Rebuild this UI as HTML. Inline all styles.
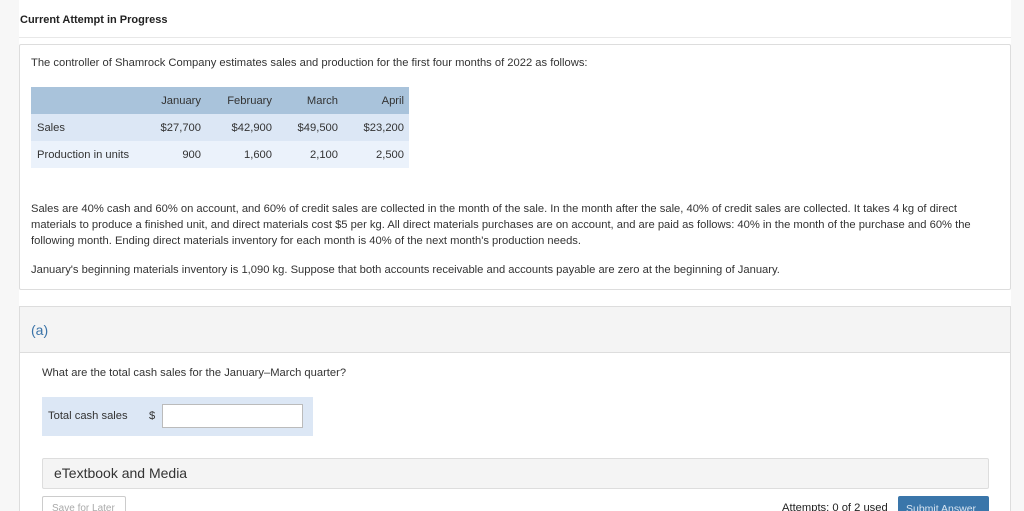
<!DOCTYPE html>
<html style="overflow:hidden;width:1024px;height:511px"><head><meta charset="utf-8"><style>
*{margin:0;padding:0;box-sizing:border-box}
body{width:1024px;height:511px;overflow:hidden;background:#fff;font-family:"Liberation Sans",sans-serif;color:#333;font-size:11.2px;position:relative}
.a{position:absolute;white-space:nowrap}
.lstrip{position:absolute;left:0;top:0;width:19px;height:511px;background:#f7f7f7}
.rstrip{position:absolute;left:1011px;top:0;width:13px;height:511px;background:#f7f7f7}
td{height:27px;padding:0 5px;font-size:11.2px;color:#333;text-align:right;white-space:nowrap}
td:first-child{text-align:left;padding-left:6px}
</style></head><body>
<div class="lstrip"></div><div class="rstrip"></div>
<div class="a" style="left:20px;top:14px;font-weight:bold;font-size:11px;color:#222">Current Attempt in Progress</div>
<div class="a" style="left:19px;top:37px;width:992px;border-top:1px solid #e8e8e8"></div>
<div class="a" style="left:19px;top:44px;width:992px;height:246px;border:1px solid #ddd;border-radius:2px"></div>
<div class="a" style="left:31px;top:57px">The controller of Shamrock Company estimates sales and production for the first four months of 2022 as follows:</div>
<table class="a" style="left:31px;top:87px;border-collapse:collapse;width:378px">
<tr style="background:#a9c3db"><td style="width:116px"></td><td style="width:59px">January</td><td style="width:71px">February</td><td style="width:66px">March</td><td>April</td></tr>
<tr style="background:#dce7f5"><td>Sales</td><td>$27,700</td><td>$42,900</td><td>$49,500</td><td>$23,200</td></tr>
<tr style="background:#ebf2fb"><td>Production in units</td><td>900</td><td>1,600</td><td>2,100</td><td>2,500</td></tr>
</table>
<div class="a" style="left:31px;top:201px;line-height:16px">Sales are 40% cash and 60% on account, and 60% of credit sales are collected in the month of the sale. In the month after the sale, 40% of credit sales are collected. It takes 4 kg of direct<br>materials to produce a finished unit, and direct materials cost $5 per kg. All direct materials purchases are on account, and are paid as follows: 40% in the month of the purchase and 60% the<br>following month. Ending direct materials inventory for each month is 40% of the next month's production needs.</div>
<div class="a" style="left:31px;top:264px">January's beginning materials inventory is 1,090 kg. Suppose that both accounts receivable and accounts payable are zero at the beginning of January.</div>
<div class="a" style="left:19px;top:306px;width:992px;height:220px;border:1px solid #ddd"></div>
<div class="a" style="left:20px;top:307px;width:990px;height:46px;background:#f4f4f4;border-bottom:1px solid #ddd"></div>
<div class="a" style="left:31px;top:322px;font-size:14px;color:#3a73a8">(a)</div>
<div class="a" style="left:42px;top:367px">What are the total cash sales for the January–March quarter?</div>
<div class="a" style="left:42px;top:397px;width:271px;height:39px;background:#dce7f5"></div>
<div class="a" style="left:48px;top:410px">Total cash sales</div>
<div class="a" style="left:149px;top:410px">$</div>
<div class="a" style="left:162px;top:404px;width:141px;height:24px;background:#fff;border:1px solid #bbb"></div>
<div class="a" style="left:42px;top:458px;width:947px;height:31px;background:#f4f4f4;border:1px solid #ddd;border-radius:2px"></div>
<div class="a" style="left:54px;top:465px;font-size:14px;color:#333">eTextbook and Media</div>
<div class="a" style="left:42px;top:496px;width:84px;height:24px;border:1px solid #ccc;border-radius:2px;font-size:10px;color:#aaa;padding:6px 0 0 9px">Save for Later</div>
<div class="a" style="left:782px;top:502px;font-size:11.2px;color:#222">Attempts: 0 of 2 used</div>
<div class="a" style="left:898px;top:496px;width:91px;height:24px;background:#3a76aa;border-radius:2px;font-size:10.5px;color:#d8e5f2;padding:7px 0 0 8px">Submit Answer</div>
</body></html>
